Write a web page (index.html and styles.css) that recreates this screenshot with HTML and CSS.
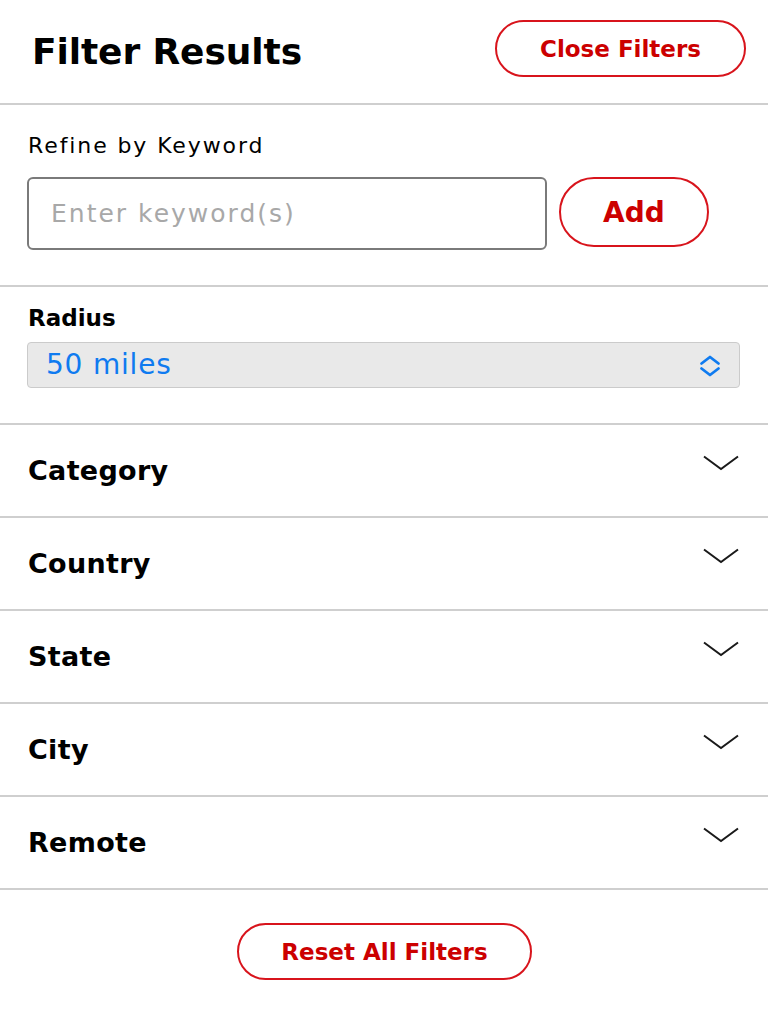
FILE: index.html
```html
<!DOCTYPE html>
<html lang="en">
<head>
<meta charset="utf-8">
<title>Filter Results</title>
<link rel="stylesheet" href="styles.css">
</head>
<body>
<div class="panel">
  <header class="header">
    <h1 class="title">Filter Results</h1>
    <button class="pill pill-close" type="button">Close Filters</button>
  </header>

  <section class="section keyword">
    <label class="label-regular" for="kw">Refine by Keyword</label>
    <div class="kw-row">
      <input id="kw" class="kw-input" type="text" placeholder="Enter keyword(s)">
      <button class="pill pill-add" type="button">Add</button>
    </div>
  </section>

  <section class="section radius">
    <div class="label-bold">Radius</div>
    <div class="select">
      <span class="select-value">50 miles</span>
      <svg class="select-icon" width="22" height="22" viewBox="0 0 22 22" aria-hidden="true">
        <path d="M2.5 8.5 L11 2 L19.5 8.5" fill="none" stroke="#0f7bf0" stroke-width="2.8" stroke-linecap="round" stroke-linejoin="round"/>
        <path d="M2.5 13.5 L11 20 L19.5 13.5" fill="none" stroke="#0f7bf0" stroke-width="2.8" stroke-linecap="round" stroke-linejoin="round"/>
      </svg>
    </div>
  </section>

  <ul class="acc">
    <li class="acc-row"><span class="acc-label">Category</span><svg class="chev" width="36" height="16" viewBox="0 0 36 16" aria-hidden="true"><path d="M1 1.5 L18 14 L35 1.5" fill="none" stroke="#1a1a1a" stroke-width="2"/></svg></li>
    <li class="acc-row"><span class="acc-label">Country</span><svg class="chev" width="36" height="16" viewBox="0 0 36 16" aria-hidden="true"><path d="M1 1.5 L18 14 L35 1.5" fill="none" stroke="#1a1a1a" stroke-width="2"/></svg></li>
    <li class="acc-row"><span class="acc-label">State</span><svg class="chev" width="36" height="16" viewBox="0 0 36 16" aria-hidden="true"><path d="M1 1.5 L18 14 L35 1.5" fill="none" stroke="#1a1a1a" stroke-width="2"/></svg></li>
    <li class="acc-row"><span class="acc-label">City</span><svg class="chev" width="36" height="16" viewBox="0 0 36 16" aria-hidden="true"><path d="M1 1.5 L18 14 L35 1.5" fill="none" stroke="#1a1a1a" stroke-width="2"/></svg></li>
    <li class="acc-row"><span class="acc-label">Remote</span><svg class="chev" width="36" height="16" viewBox="0 0 36 16" aria-hidden="true"><path d="M1 1.5 L18 14 L35 1.5" fill="none" stroke="#1a1a1a" stroke-width="2"/></svg></li>
  </ul>

  <footer class="footer">
    <button class="pill pill-reset" type="button">Reset All Filters</button>
  </footer>
</div>
</body>
</html>
```

FILE: styles.css
```css
html, body {
  margin: 0;
  padding: 0;
  background: #ffffff;
}

body {
  font-family: "DejaVu Sans", "Noto Sans", sans-serif;
  color: #000000;
}

.panel {
  width: 768px;
}

.header {
  height: 103px;
  display: flex;
  align-items: center;
  justify-content: space-between;
  padding: 0 22px 0 32px;
  border-bottom: 2px solid #cfcfcf;
}

.title {
  margin: 0;
  font-size: 36px;
  font-weight: bold;
  letter-spacing: -0.1px;
  line-height: 1.164;
}

.pill {
  font-family: "DejaVu Sans", "Noto Sans", sans-serif;
  font-weight: bold;
  color: #cc0000;
  background: #ffffff;
  border: 2px solid #d8141c;
  border-radius: 40px;
  padding: 0;
  cursor: pointer;
}

.pill-close {
  width: 251px;
  height: 57px;
  font-size: 23px;
  margin-top: -6px;
}

.section {
  padding: 28px 28px 35px 27px;
  border-bottom: 2px solid #cfcfcf;
}

.label-regular {
  display: block;
  font-size: 22px;
  line-height: 26px;
  letter-spacing: 1.9px;
  padding-left: 1px;
}

.kw-row {
  display: flex;
  align-items: center;
  gap: 12px;
  margin-top: 18px;
}

.kw-input {
  box-sizing: border-box;
  width: 520px;
  height: 73px;
  border: 2px solid #7a7a7a;
  border-radius: 6px;
  padding: 0 0 0 22px;
  font-family: "DejaVu Sans", "Noto Sans", sans-serif;
  font-size: 25px;
  letter-spacing: 2px;
  color: #000;
  background: #fff;
  outline: none;
}

.kw-input::placeholder {
  color: #a8a8a8;
}

.pill-add {
  width: 150px;
  height: 70px;
  font-size: 28px;
  margin-top: -3px;
}

.radius {
  padding-top: 18px;
}

.label-bold {
  font-size: 23px;
  font-weight: bold;
  line-height: 26px;
  padding-left: 1px;
}

.select {
  box-sizing: border-box;
  margin-top: 11px;
  width: 713px;
  height: 46px;
  display: flex;
  align-items: center;
  justify-content: space-between;
  padding: 0 18px 0 18px;
  background: #e9e9e9;
  border: 1px solid #cbcbcb;
  border-radius: 4px;
}

.select-value {
  font-size: 28px;
  letter-spacing: 0.8px;
  color: #0f7bf0;
  line-height: 1;
}

.select-icon {
  display: block;
  margin-top: 1px;
}

.acc {
  list-style: none;
  margin: 0;
  padding: 0;
}

.acc-row {
  height: 91px;
  display: flex;
  align-items: center;
  justify-content: space-between;
  padding: 0 29px 0 28px;
  border-bottom: 2px solid #cfcfcf;
}

.acc-label {
  font-size: 27px;
  font-weight: bold;
  letter-spacing: 0.3px;
}

.chev {
  display: block;
  margin-bottom: 15px;
}

.footer {
  display: flex;
  justify-content: center;
  padding: 33px 0 40px;
}

.pill-reset {
  width: 295px;
  height: 57px;
  font-size: 23px;
  margin-left: 1px;
}
```
